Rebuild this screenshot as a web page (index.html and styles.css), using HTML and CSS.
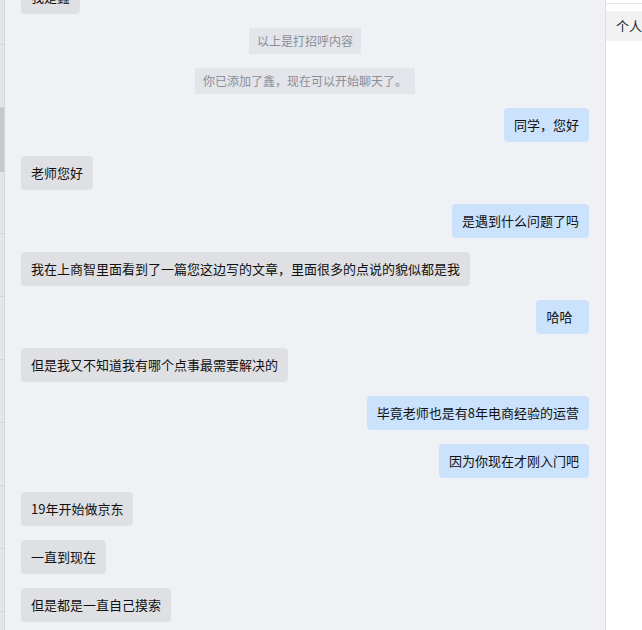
FILE: index.html
```html
<!DOCTYPE html>
<html lang="zh-CN">
<head>
<meta charset="utf-8">
<title>聊天</title>
<link rel="stylesheet" href="styles.css">
</head>
<body>
<div class="app">
  <aside class="contacts">
    <div class="contact-list">
      <div class="contact"></div>
      <div class="contact"></div>
      <div class="contact"></div>
      <div class="contact"></div>
      <div class="contact"></div>
      <div class="contact"></div>
      <div class="contact"></div>
      <div class="contact"></div>
      <div class="contact"></div>
      <div class="contact"></div>
      <div class="contact"></div>
    </div>
    <div class="scroll-thumb"></div>
  </aside>
  <main class="chat">
    <div class="msg left"><span class="bubble">我是鑫</span></div>
    <div class="msg sys"><span class="sys-bubble">以上是打招呼内容</span></div>
    <div class="msg sys"><span class="sys-bubble">你已添加了鑫，现在可以开始聊天了。</span></div>
    <div class="msg right"><span class="bubble">同学，您好</span></div>
    <div class="msg left"><span class="bubble">老师您好</span></div>
    <div class="msg right"><span class="bubble">是遇到什么问题了吗</span></div>
    <div class="msg left"><span class="bubble">我在上商智里面看到了一篇您这边写的文章，里面很多的点说的貌似都是我</span></div>
    <div class="msg right"><span class="bubble">哈哈&ensp;</span></div>
    <div class="msg left"><span class="bubble">但是我又不知道我有哪个点事最需要解决的</span></div>
    <div class="msg right"><span class="bubble">毕竟老师也是有8年电商经验的运营</span></div>
    <div class="msg right"><span class="bubble">因为你现在才刚入门吧</span></div>
    <div class="msg left"><span class="bubble">19年开始做京东</span></div>
    <div class="msg left"><span class="bubble">一直到现在</span></div>
    <div class="msg left"><span class="bubble">但是都是一直自己摸索</span></div>
  </main>
  <aside class="panel">
    <div class="panel-top"></div>
    <div class="tabs"><span class="tab">个人信息</span></div>
  </aside>
</div>
</body>
</html>
```
FILE: styles.css
```css
* { box-sizing: border-box; }
html, body { margin: 0; padding: 0; }
body {
  width: 642px;
  height: 630px;
  overflow: hidden;
  font-family: "Noto Sans CJK SC", "Noto Sans", "Liberation Sans", sans-serif;
  background: #ffffff;
}
.app {
  display: flex;
  height: 630px;
}
.contacts {
  position: relative;
  width: 5px;
  flex: none;
  background: #e4e5e9;
  border-right: 1px solid #d5d6da;
  overflow: hidden;
}
.contact-list {
  display: flex;
  flex-direction: column;
  margin-top: -18px;
}
.contact {
  height: 63px;
  flex: none;
  border-bottom: 1px solid #d3d4d8;
}
.scroll-thumb {
  position: absolute;
  left: 0;
  top: 108px;
  width: 4px;
  height: 64px;
  background: #c6c7ca;
}
.chat {
  width: 600px;
  flex: none;
  height: 630px;
  background: #f0f1f4;
  display: flex;
  flex-direction: column;
  justify-content: flex-end;
  gap: 14px;
  padding: 0 16px 8px 16px;
  overflow: hidden;
}
.msg {
  display: flex;
  flex: none;
}
.msg.left { justify-content: flex-start; }
.msg.right { justify-content: flex-end; }
.msg.sys { justify-content: center; }
.bubble {
  display: block;
  font-size: 13px;
  line-height: 18px;
  padding: 8px 10px;
  border-radius: 4px;
  color: #111111;
  white-space: nowrap;
}
.left .bubble { background: #dfe0e4; }
.right .bubble { background: #cae2fc; }
.sys-bubble {
  display: block;
  font-size: 12px;
  line-height: 18px;
  padding: 4px 8px;
  background: #e3e5ea;
  color: #8a8e97;
  white-space: nowrap;
}
.panel {
  flex: 1;
  min-width: 0;
  border-left: 1px solid #dcdde1;
  background: #ffffff;
  overflow: hidden;
}
.panel-top {
  height: 4px;
  border-bottom: 1px solid #e6e6e6;
}
.tabs {
  margin-top: 7px;
  display: flex;
}
.tab {
  display: block;
  height: 30px;
  line-height: 30px;
  padding: 0 10px;
  background: #f2f2f2;
  font-size: 13px;
  color: #222222;
  white-space: nowrap;
}
```
